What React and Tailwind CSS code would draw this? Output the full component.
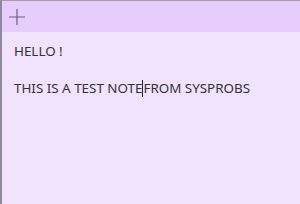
import React from 'react';

const App = () => {
  return (
    <div
      className="w-[300px] h-[204px] flex flex-col bg-[#f1e3fe] border-l-2 border-l-[#8e8a93] border-t border-t-[#a39fa8] text-[#333333] overflow-hidden"
      style={{ fontFamily: '"Noto Sans", "Open Sans", sans-serif' }}
    >
      {/* Header */}
      <div className="h-[31px] bg-[#e6cdfc] flex items-center pl-[6px]">
        <svg width="18" height="18" viewBox="0 0 18 18" className="text-[#6b6470]">
          <path d="M9 1v16M1 9h16" stroke="currentColor" strokeWidth="1.2" />
        </svg>
      </div>

      {/* Note body */}
      <div className="flex flex-col px-[12px] pt-[10px] text-[13.4px] leading-[18px]">
        <p>HELLO !</p>
        <p className="mt-[19px]">
          THIS IS A TEST NOTE<span className="inline-block w-px h-[17px] bg-[#222] align-middle -mt-[2px]"></span>FROM SYSPROBS
        </p>
      </div>
    </div>
  );
};

export default App;
